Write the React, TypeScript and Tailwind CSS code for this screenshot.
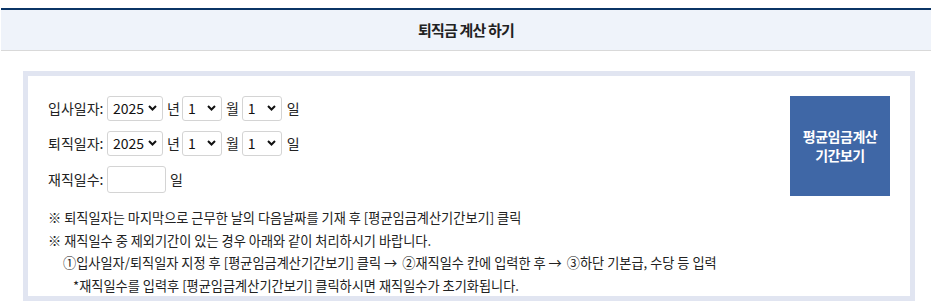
import React from "react";

const years = ["2025", "2024", "2023", "2022", "2021", "2020"];
const months = Array.from({ length: 12 }, (_, i) => String(i + 1));
const days = Array.from({ length: 31 }, (_, i) => String(i + 1));

function Sel({ value, options, w }: { value: string; options: string[]; w: string }) {
  return (
    <div className={`relative h-[25px] ${w}`}>
      <select
        defaultValue={value}
        className="appearance-none h-[25px] w-full border border-[#d4d4d4] rounded-[3px] bg-white pl-[5px] text-[14px] text-[#111] outline-none"
      >
        {options.map((o) => (
          <option key={o}>{o}</option>
        ))}
      </select>
      <svg
        className="absolute right-[6px] top-[9px] pointer-events-none"
        width="9"
        height="6"
        viewBox="0 0 9 6"
      >
        <path d="M1 1 L4.5 4.5 L8 1" fill="none" stroke="#111" strokeWidth="2" />
      </svg>
    </div>
  );
}

function DateRow({ label }: { label: string }) {
  return (
    <div className="flex items-center h-[25px]">
      <span className="w-[59px]">{label}</span>
      <Sel value="2025" options={years} w="w-[56px]" />
      <span className="ml-[4px] mr-[2px]">년</span>
      <Sel value="1" options={months} w="w-[40px]" />
      <span className="ml-[4px] mr-[3px]">월</span>
      <Sel value="1" options={days} w="w-[40px]" />
      <span className="ml-[5px]">일</span>
    </div>
  );
}

export default function App() {
  return (
    <div
      className="w-[931px] h-[305px] bg-white text-[#222] overflow-hidden"
      style={{ fontFamily: '"Noto Sans CJK KR", "Noto Sans", sans-serif' }}
    >
      <div className="h-[8px]" />
      <div className="ml-px h-[43px] bg-[#eff3fa] border-t-2 border-[#0b3566] border-b border-b-[#d9d9d9] flex items-center justify-center">
        <span className="text-[15px] font-bold tracking-[-0.8px] text-[#222]">퇴직금 계산 하기</span>
      </div>
      <div className="mt-[20px] ml-[23px] w-[892px] h-[230px] border-[5px] border-[#e1e5f1] flex pl-[20px] pr-[20px] pt-[20px]">
        <div className="flex-1 text-[14px]">
          <div className="flex flex-col gap-[10px]">
            <DateRow label="입사일자:" />
            <DateRow label="퇴직일자:" />
            <div className="flex items-center h-[27px]">
              <span className="w-[59px]">재직일수:</span>
              <input className="h-[27px] w-[59px] border border-[#d4d4d4] rounded-[3px] bg-white outline-none" />
              <span className="ml-[4px]">일</span>
            </div>
          </div>
          <div className="mt-[14px] text-[13.2px] leading-[22.5px] text-[#222]">
            <div>※ 퇴직일자는 마지막으로 근무한 날의 다음날짜를 기재 후 [평균임금계산기간보기] 클릭</div>
            <div>※ 재직일수 중 제외기간이 있는 경우 아래와 같이 처리하시기 바랍니다.</div>
            <div className="pl-[15px]">
              ①입사일자/퇴직일자 지정 후 [평균임금계산기간보기] 클릭 <span className="tracking-[2px]">→</span> ②재직일수 칸에 입력한 후 <span className="tracking-[2px]">→</span> ③하단 기본급, 수당 등 입력
            </div>
            <div className="pl-[25px]">*재직일수를 입력후 [평균임금계산기간보기] 클릭하시면 재직일수가 초기화됩니다.</div>
          </div>
        </div>
        <div className="w-[100px] h-[100px] bg-[#3f67a6] text-white font-bold text-[14px] tracking-[-0.5px] leading-[19px] flex flex-col items-center justify-center">
          <span>평균임금계산</span>
          <span>기간보기</span>
        </div>
      </div>
    </div>
  );
}
